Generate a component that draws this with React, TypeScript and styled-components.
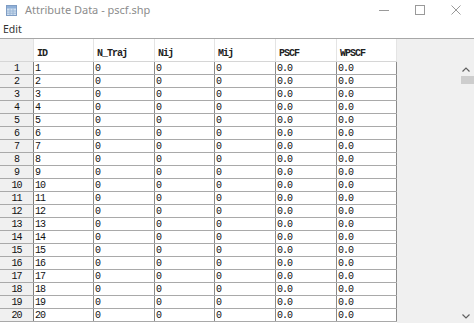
import React from "react";
import styled, { createGlobalStyle } from "styled-components";

const Global = createGlobalStyle`
  html, body { margin: 0; padding: 0; background: #ffffff; overflow: hidden; }
  #root { width: 474px; height: 323px; }
`;

const Window = styled.div`
  width: 474px;
  height: 323px;
  display: flex;
  flex-direction: column;
  background: #ffffff;
  overflow: hidden;
`;

const TitleBar = styled.div`
  height: 20px;
  display: flex;
  align-items: center;
  padding-left: 6px;
  gap: 8px;
  font-family: "Noto Sans", "Open Sans", sans-serif;
  font-size: 11px;
  color: #8c8c8c;
`;

const TitleText = styled.span`
  flex: 1;
  line-height: 20px;
`;

const Controls = styled.div`
  display: flex;
  height: 20px;
`;

const CtrlButton = styled.div`
  width: 36px;
  height: 20px;
  display: flex;
  align-items: center;
  justify-content: center;
`;

const MenuBar = styled.div`
  height: 18px;
  display: flex;
  align-items: center;
  padding-left: 3px;
  font-family: "Noto Sans", "Open Sans", sans-serif;
  font-size: 10.5px;
  color: #333333;
`;

const GridArea = styled.div`
  flex: 1;
  display: flex;
  border-top: 1px solid #a7a7a7;
  min-height: 0;
`;

const Table = styled.div`
  display: flex;
  flex-direction: column;
`;

const Row = styled.div`
  display: flex;
  height: 12px;
  border-bottom: 1px solid #a9a9a9;
`;

const HeaderRow = styled.div`
  display: flex;
  height: 22px;
  border-bottom: 1px solid #d6d6d6;
`;

const Corner = styled.div`
  width: 33px;
  background: #f0f0f0;
  border-right: 1px solid #e2e2e2;
`;

const HeaderCell = styled.div<{ $w: number }>`
  width: ${(p) => p.$w - 1}px;
  border-right: 1px solid #e4e4e4;
  background: #ffffff;
  box-sizing: border-box;
  padding: 10px 0 0 3px;
  font-family: "Liberation Mono", "DejaVu Sans Mono", monospace;
  font-weight: bold;
  font-size: 10px;
  letter-spacing: -1px;
  color: #222222;
  line-height: 10px;
`;

const RowHead = styled.div`
  width: 33px;
  background: #f0f0f0;
  border-right: 1px solid #7e7e7e;
  text-align: center;
  font-family: "Liberation Mono", "DejaVu Sans Mono", monospace;
  font-size: 10px;
  letter-spacing: -1px;
  line-height: 13px;
  color: #111111;
`;

const Cell = styled.div<{ $w: number }>`
  width: ${(p) => p.$w - 1}px;
  border-right: 1px solid #8a8a8a;
  box-sizing: border-box;
  padding-left: 1px;
  background: #ffffff;
  font-family: "Liberation Mono", "DejaVu Sans Mono", monospace;
  font-size: 10px;
  letter-spacing: -1px;
  line-height: 13px;
  color: #111111;
  white-space: nowrap;
  overflow: hidden;
`;

const Side = styled.div`
  flex: 1;
  background: #f0f0f0;
  display: flex;
  flex-direction: column;
  align-items: flex-end;
`;

const SideHeader = styled.div`
  height: 23px;
  flex: none;
`;

const ScrollBar = styled.div`
  width: 17px;
  flex: 1;
  background: #f0f0f0;
  display: flex;
  flex-direction: column;
  align-items: center;
`;

const Arrow = styled.div`
  width: 17px;
  height: 14px;
  display: flex;
  align-items: center;
  justify-content: center;
  flex: none;
`;

const Thumb = styled.div`
  width: 13px;
  margin-left: 4px;
  height: 8px;
  background: #cdcdcd;
  flex: none;
`;

const Spacer = styled.div`
  flex: 1;
`;

const columns = [
  { name: "ID", w: 61 },
  { name: "N_Traj", w: 62 },
  { name: "Nij", w: 61 },
  { name: "Mij", w: 62 },
  { name: "PSCF", w: 62 },
  { name: "WPSCF", w: 61 },
];

const rows = Array.from({ length: 20 }, (_, i) => i + 1);

function valueFor(col: number, r: number): string {
  if (col === 0) return String(r);
  if (col <= 3) return "0";
  return "0.0";
}

export default function App() {
  return (
    <Window>
      <Global />
      <TitleBar>
        <svg width="11" height="11" viewBox="0 0 11 11">
          <rect x="0.5" y="0.5" width="10" height="10" fill="#cfdff0" stroke="#7f9dc4" />
          <rect x="1" y="1" width="9" height="2.5" fill="#8fb0d8" />
          <line x1="4" y1="3.5" x2="4" y2="10" stroke="#9ab6d6" />
          <line x1="7" y1="3.5" x2="7" y2="10" stroke="#9ab6d6" />
          <line x1="1" y1="6" x2="10" y2="6" stroke="#9ab6d6" />
          <line x1="1" y1="8.2" x2="10" y2="8.2" stroke="#9ab6d6" />
        </svg>
        <TitleText>Attribute Data - pscf.shp</TitleText>
        <Controls>
          <CtrlButton>
            <svg width="10" height="10" viewBox="0 0 10 10">
              <line x1="0" y1="5.5" x2="10" y2="5.5" stroke="#9a9a9a" />
            </svg>
          </CtrlButton>
          <CtrlButton>
            <svg width="10" height="10" viewBox="0 0 10 10">
              <rect x="0.5" y="0.5" width="9" height="9" fill="none" stroke="#9a9a9a" />
            </svg>
          </CtrlButton>
          <CtrlButton>
            <svg width="10" height="10" viewBox="0 0 10 10">
              <path d="M0.5 0.5 L9.5 9.5 M9.5 0.5 L0.5 9.5" stroke="#9a9a9a" />
            </svg>
          </CtrlButton>
        </Controls>
      </TitleBar>
      <MenuBar>Edit</MenuBar>
      <GridArea>
        <Table>
          <HeaderRow>
            <Corner />
            {columns.map((c) => (
              <HeaderCell key={c.name} $w={c.w}>
                {c.name}
              </HeaderCell>
            ))}
          </HeaderRow>
          {rows.map((r) => (
            <Row key={r}>
              <RowHead>{r}</RowHead>
              {columns.map((c, ci) => (
                <Cell key={c.name} $w={c.w}>
                  {valueFor(ci, r)}
                </Cell>
              ))}
            </Row>
          ))}
        </Table>
        <Side>
          <SideHeader />
          <ScrollBar>
            <Arrow>
              <svg width="8" height="5" viewBox="0 0 8 5">
                <path d="M0.5 4.5 L4 1 L7.5 4.5" fill="none" stroke="#606060" strokeWidth="1.2" />
              </svg>
            </Arrow>
            <Thumb />
            <Spacer />
            <Arrow>
              <svg width="8" height="5" viewBox="0 0 8 5">
                <path d="M0.5 0.5 L4 4 L7.5 0.5" fill="none" stroke="#606060" strokeWidth="1.2" />
              </svg>
            </Arrow>
          </ScrollBar>
        </Side>
      </GridArea>
    </Window>
  );
}
